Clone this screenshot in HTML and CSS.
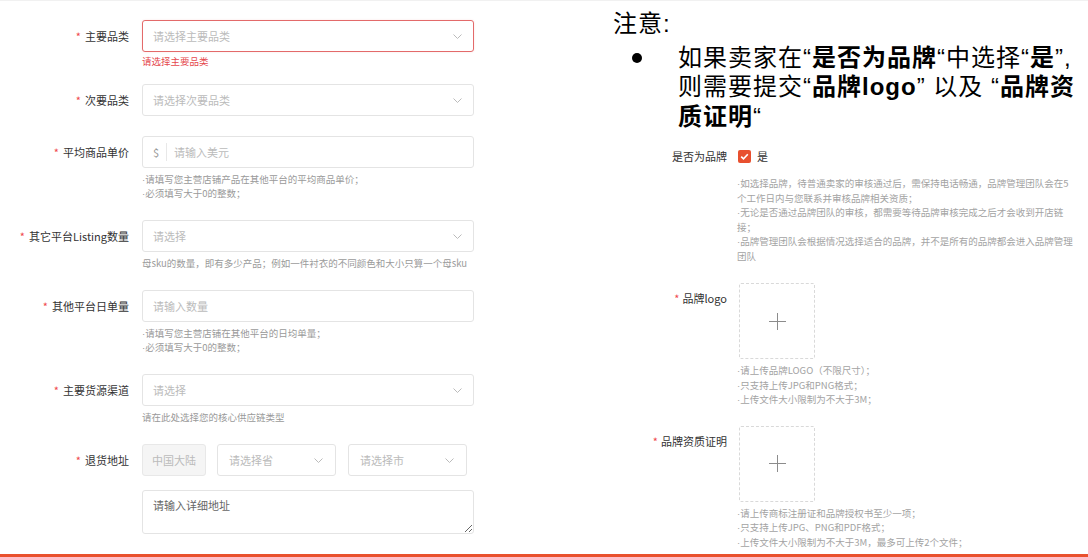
FILE: index.html
```html
<!DOCTYPE html>
<html lang="zh-CN">
<head>
    <meta charset="UTF-8">
    <meta name="viewport" content="width=device-width, initial-scale=1.0">
    <title>店铺资料</title>
    <link rel="stylesheet" href="styles.css">
</head>
<body>
    <div class="page">
        <form class="shop-form">
            <div class="form-row has-error">
                <label class="form-label"><span class="req">*</span>主要品类</label>
                <div class="form-control">
                    <div class="field is-error">
                        <span>请选择主要品类</span>
                        <svg class="arrow" width="9" height="5" viewBox="0 0 9 5"><path d="M0.5 0.5l4 4 4-4" fill="none" stroke="#bbb"/></svg>
                    </div>
                    <div class="error-text">请选择主要品类</div>
                </div>
            </div>

            <div class="form-row">
                <label class="form-label"><span class="req">*</span>次要品类</label>
                <div class="form-control">
                    <div class="field">
                        <span>请选择次要品类</span>
                        <svg class="arrow" width="9" height="5" viewBox="0 0 9 5"><path d="M0.5 0.5l4 4 4-4" fill="none" stroke="#bbb"/></svg>
                    </div>
                </div>
            </div>

            <div class="form-row">
                <label class="form-label"><span class="req">*</span>平均商品单价</label>
                <div class="form-control">
                    <div class="field">
                        <span class="prefix">$</span>
                        <input class="field-input" type="text" placeholder="请输入美元">
                    </div>
                    <ul class="help bullets">
                        <li>请填写您主营店铺产品在其他平台的平均商品单价；</li>
                        <li>必须填写大于0的整数；</li>
                    </ul>
                </div>
            </div>

            <div class="form-row">
                <label class="form-label"><span class="req">*</span>其它平台Listing数量</label>
                <div class="form-control">
                    <div class="field">
                        <span>请选择</span>
                        <svg class="arrow" width="9" height="5" viewBox="0 0 9 5"><path d="M0.5 0.5l4 4 4-4" fill="none" stroke="#bbb"/></svg>
                    </div>
                    <ul class="help">
                        <li>母sku的数量，即有多少产品；例如一件衬衣的不同颜色和大小只算一个母sku</li>
                    </ul>
                </div>
            </div>

            <div class="form-row">
                <label class="form-label"><span class="req">*</span>其他平台日单量</label>
                <div class="form-control">
                    <div class="field">
                        <input class="field-input" type="text" placeholder="请输入数量">
                    </div>
                    <ul class="help bullets">
                        <li>请填写您主营店铺在其他平台的日均单量；</li>
                        <li>必须填写大于0的整数；</li>
                    </ul>
                </div>
            </div>

            <div class="form-row">
                <label class="form-label"><span class="req">*</span>主要货源渠道</label>
                <div class="form-control">
                    <div class="field">
                        <span>请选择</span>
                        <svg class="arrow" width="9" height="5" viewBox="0 0 9 5"><path d="M0.5 0.5l4 4 4-4" fill="none" stroke="#bbb"/></svg>
                    </div>
                    <ul class="help">
                        <li>请在此处选择您的核心供应链类型</li>
                    </ul>
                </div>
            </div>

            <div class="form-row">
                <label class="form-label"><span class="req">*</span>退货地址</label>
                <div class="form-control">
                    <div class="address-row">
                        <div class="field country">中国大陆</div>
                        <div class="field region">
                            <span>请选择省</span>
                            <svg class="arrow" width="9" height="5" viewBox="0 0 9 5"><path d="M0.5 0.5l4 4 4-4" fill="none" stroke="#bbb"/></svg>
                        </div>
                        <div class="field region">
                            <span>请选择市</span>
                            <svg class="arrow" width="9" height="5" viewBox="0 0 9 5"><path d="M0.5 0.5l4 4 4-4" fill="none" stroke="#bbb"/></svg>
                        </div>
                    </div>
                    <textarea class="address-detail" placeholder="请输入详细地址"></textarea>
                </div>
            </div>
        </form>

        <div class="side">
            <div class="notice">
                <p class="notice-title">注意:</p>
                <div class="notice-item">
                    <span class="dot"></span>
                    <p class="notice-text">如果卖家在“<b>是否为品牌</b>“中选择“<b>是</b>”,则需要提交“<b>品牌logo</b>” 以及 “<b>品牌资质证明</b>“</p>
                </div>
            </div>

            <div class="brand-form">
                <div class="brand-row">
                    <div class="brand-label">是否为品牌</div>
                    <div class="brand-control">
                        <div class="check">
                            <svg width="13" height="13" viewBox="0 0 13 13"><rect width="13" height="13" rx="2" fill="#e8502f"/><path d="M3.2 6.6l2.3 2.3 4.3-4.6" fill="none" stroke="#fff" stroke-width="1.6"/></svg>
                            <span>是</span>
                        </div>
                        <ul class="help bullets side-help">
                            <li>如选择品牌，待普通卖家的审核通过后，需保持电话畅通，品牌管理团队会在5个工作日内与您联系并审核品牌相关资质；</li>
                            <li>无论是否通过品牌团队的审核，都需要等待品牌审核完成之后才会收到开店链接；</li>
                            <li>品牌管理团队会根据情况选择适合的品牌，并不是所有的品牌都会进入品牌管理团队</li>
                        </ul>
                    </div>
                </div>

                <div class="brand-row upload-row">
                    <div class="brand-label tall"><span class="req">*</span>品牌logo</div>
                    <div class="brand-control">
                        <div class="upload">
                            <span class="plus"></span>
                        </div>
                        <ul class="help bullets side-help">
                            <li>请上传品牌LOGO（不限尺寸）；</li>
                            <li>只支持上传JPG和PNG格式；</li>
                            <li>上传文件大小限制为不大于3M；</li>
                        </ul>
                    </div>
                </div>

                <div class="brand-row upload-row">
                    <div class="brand-label tall"><span class="req">*</span>品牌资质证明</div>
                    <div class="brand-control">
                        <div class="upload">
                            <span class="plus"></span>
                        </div>
                        <ul class="help bullets side-help">
                            <li>请上传商标注册证和品牌授权书至少一项；</li>
                            <li>只支持上传JPG、PNG和PDF格式；</li>
                            <li>上传文件大小限制为不大于3M，最多可上传2个文件；</li>
                        </ul>
                    </div>
                </div>
            </div>
        </div>
    </div>
</body>
</html>
```

FILE: styles.css
```css
* {
    box-sizing: border-box;
}

body {
    margin: 0;
    background: #fff;
    font-family: "Noto Sans CJK SC", "Microsoft YaHei", sans-serif;
    color: #333;
}

.page {
    height: 557px;
    display: flex;
    overflow: hidden;
    border-top: 1px solid #f1f1f1;
    border-bottom: 3px solid #e9502d;
}

/* left form */

.shop-form {
    width: 480px;
    flex-shrink: 0;
    padding-top: 19px;
}

.form-row {
    display: flex;
    margin-bottom: 20px;
}

.form-row.has-error {
    margin-bottom: 16px;
}

.form-label {
    width: 142px;
    flex-shrink: 0;
    padding-right: 13px;
    text-align: right;
    font-size: 11px;
    line-height: 32px;
    white-space: nowrap;
}

.req {
    color: #f0474b;
    margin-right: 4px;
}

.form-control {
    width: 332px;
}

.field {
    height: 32px;
    display: flex;
    align-items: center;
    padding: 0 11px 0 10px;
    border: 1px solid #e4e4e4;
    border-radius: 3px;
    background: #fff;
    font-size: 11px;
    color: #bbb;
    white-space: nowrap;
}

.field.is-error {
    border-color: #e36a6a;
    box-shadow: 0 0 2px rgba(228, 57, 60, 0.15);
}

.arrow {
    margin-left: auto;
    flex-shrink: 0;
}

.prefix {
    color: #999;
    padding-right: 7px;
    margin-right: 7px;
    border-right: 1px solid #e8e8e8;
    line-height: 18px;
}

.field-input {
    flex: 1;
    border: none;
    outline: none;
    padding: 0;
    font-family: inherit;
    font-size: 11px;
    color: #333;
    background: transparent;
}

.field-input::placeholder {
    color: #bbb;
}

.error-text {
    margin-top: 2px;
    font-size: 9.5px;
    line-height: 14px;
    color: #e5484d;
}

.help {
    margin: 4px 0 0;
    padding: 0;
    list-style: none;
    font-size: 9.5px;
    line-height: 14px;
    color: #9a9a9a;
}

.help.bullets li::before {
    content: "·";
    font-family: "Liberation Sans", sans-serif;
    line-height: 0;
}

.address-row {
    display: flex;
    gap: 11px;
}

.country {
    width: 64px;
    padding: 0 9px;
    background: #f5f5f5;
    border-color: #e8e8e8;
}

.region {
    width: 119px;
    padding: 0 12px 0 11px;
}

.address-row .region + .region {
    margin-left: 1px;
}

.address-detail {
    display: block;
    width: 332px;
    height: 44px;
    margin-top: 14px;
    padding: 7px 10px;
    border: 1px solid #e4e4e4;
    border-radius: 3px;
    font-family: inherit;
    font-size: 11px;
    line-height: 14px;
    color: #333;
    outline: none;
}

.address-detail::placeholder {
    color: #666;
}

/* right column */

.side {
    margin-left: 120px;
    width: 488px;
}

.notice {
    padding: 8px 0 0 13px;
    font-family: "Liberation Sans", "Noto Sans CJK SC", sans-serif;
    font-size: 24px;
    line-height: 29.5px;
    letter-spacing: 1px;
    color: #000;
}

.notice p {
    margin: 0;
}

.notice-item {
    display: flex;
    margin-top: 4px;
}

.dot {
    width: 10px;
    height: 10px;
    flex-shrink: 0;
    margin: 10px 36px 0 19px;
    border-radius: 50%;
    background: #000;
}

.notice-text {
    width: 404px;
}

.notice-text b {
    font-weight: 700;
}

.brand-form {
    margin-top: 15px;
}

.brand-row {
    display: flex;
}

.upload-row {
    margin-top: 20px;
}

.upload-row + .upload-row {
    margin-top: 19px;
}

.brand-label {
    width: 127px;
    flex-shrink: 0;
    text-align: right;
    font-size: 11px;
    line-height: 20px;
    white-space: nowrap;
}

.brand-label.tall {
    line-height: 31px;
}

.brand-label .req {
    margin-right: 3px;
}

.brand-control {
    margin-left: 10px;
    width: 338px;
}

.check {
    display: flex;
    align-items: center;
    gap: 6px;
    height: 20px;
    padding-left: 1px;
    font-size: 11px;
}

.check svg {
    display: block;
}

.side-help {
    color: #a3a3a3;
    line-height: 14.5px;
}

.brand-row:first-child .side-help {
    margin-top: 10px;
}

.upload {
    width: 76px;
    height: 76px;
    margin-left: 2px;
    display: flex;
    align-items: center;
    justify-content: center;
    border: 1px dashed #d9d9d9;
    border-radius: 2px;
}

.plus {
    width: 17px;
    height: 17px;
    background:
        linear-gradient(#8c8c8c, #8c8c8c) center / 17px 1px no-repeat,
        linear-gradient(#8c8c8c, #8c8c8c) center / 1px 17px no-repeat;
}
```
